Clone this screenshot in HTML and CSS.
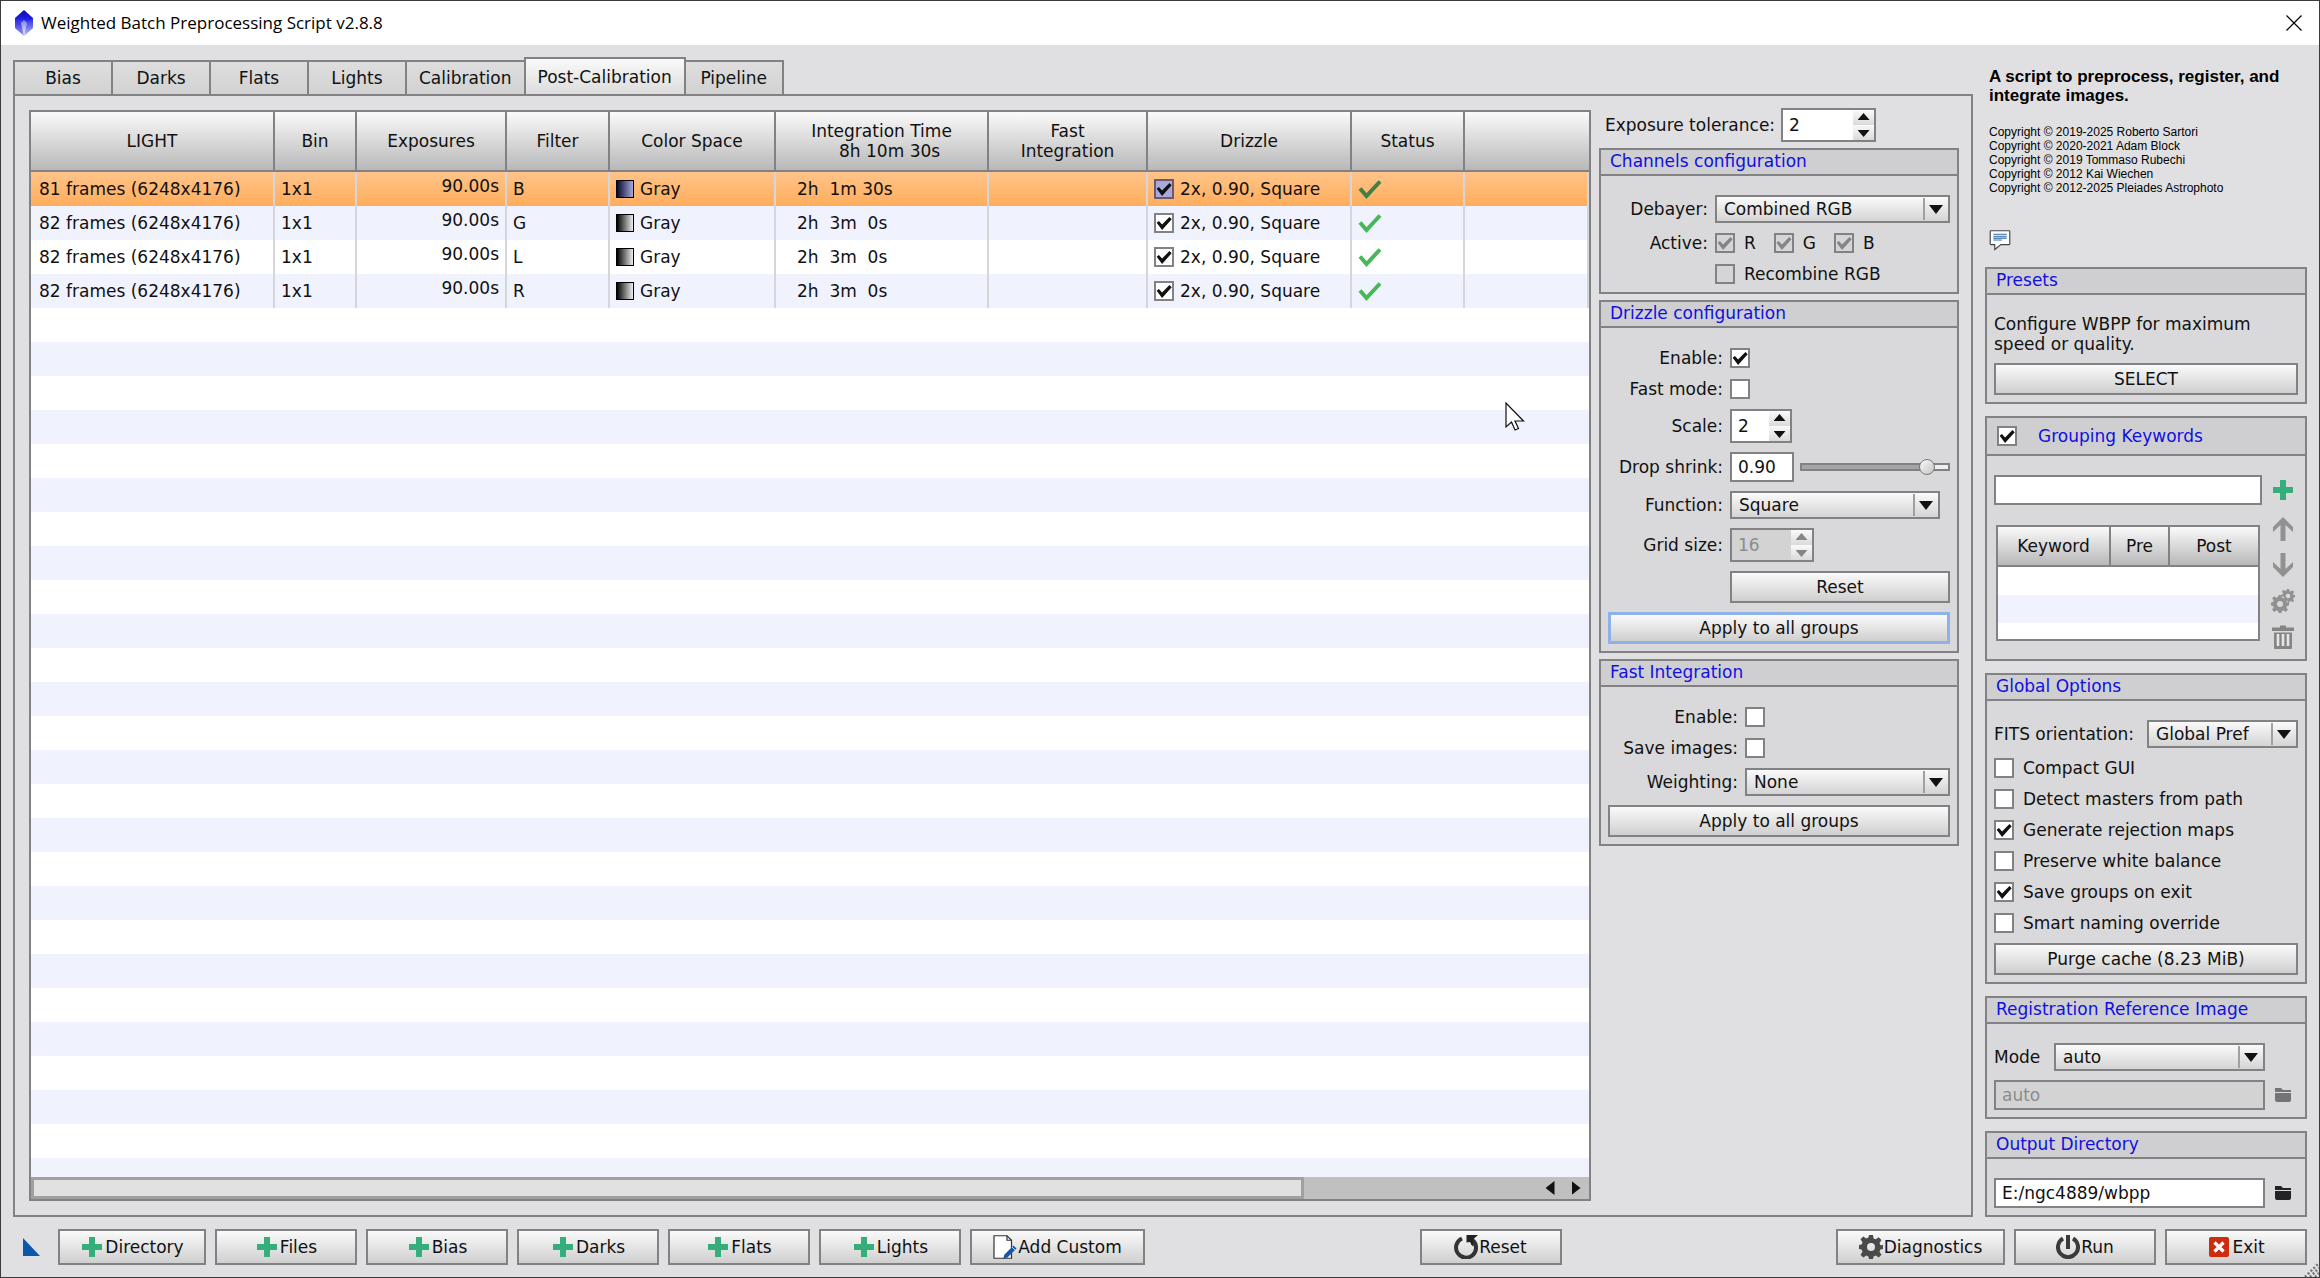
FILE: index.html
```html
<!DOCTYPE html>
<html lang="en">
<head>
<meta charset="utf-8">
<title>Weighted Batch Preprocessing Script v2.8.8</title>
<link rel="stylesheet" href="styles.css">
</head>
<body>
<svg class="defs" aria-hidden="true">
  <symbol id="i-plus" viewBox="0 0 24 24"><path d="M9 2h6v7h7v6h-7v7H9v-7H2V9h7z" fill="#36ae7c"/></symbol>
  <symbol id="i-up" viewBox="0 0 24 24"><path d="M12 0 22 10v5l-7.500-7V24h-5V8L2 15v-5z" fill="#919191"/></symbol>
  <symbol id="i-down" viewBox="0 0 24 24"><path d="M12 24 22 14V9l-7.500 7V0h-5v16L2 9v5z" fill="#919191"/></symbol>
  <symbol id="i-gear" viewBox="0 0 24 24"><path fill-rule="evenodd" d="M10 0h4l.6 3.400 2.200.9 2.900-2 2.800 2.800-2 2.900.9 2.200L24 10v4l-2.600.6-.9 2.200 2 2.900-2.800 2.800-2.900-2-2.200.9L14 24h-4l-.6-2.600-2.200-.9-2.900 2-2.800-2.800 2-2.900-.9-2.200L0 14v-4l2.600-.6.9-2.200-2-2.900 2.800-2.800 2.900 2 2.200-.9zM12 8a4 4 0 1 0 0 8 4 4 0 0 0 0-8z"/></symbol>
  <symbol id="i-folder" viewBox="0 0 18 16"><path d="M1 1h6l2 2h8v2H1z M1 6h16v7q0 2-2 2H3q-2 0-2-2z"/></symbol>
  <symbol id="i-ok" viewBox="0 0 24 20"><path d="M2 9.500 8.500 17 22 2.500" fill="none" stroke="currentColor" stroke-width="4"/></symbol>
</svg>

<div class="window">
  <header class="titlebar">
    <svg class="logo" viewBox="0 0 20 26"><defs><linearGradient id="gem" x1="0" y1="0" x2="0" y2="1"><stop offset="0" stop-color="#0808b4"/><stop offset=".35" stop-color="#2020e0"/><stop offset=".65" stop-color="#8080f4"/><stop offset="1" stop-color="#fafaff"/></linearGradient></defs><path d="M10 0 19 8v10l-9 8-9-8V8z" fill="url(#gem)"/><path d="m1 9 6 4 3 13-9-8z" fill="#2a2ae0" opacity=".45"/><path d="m19 9-6 4-3 13 9-8z" fill="#5050e8" opacity=".35"/><path d="m7 13 3-3 3 3-3 13z" fill="#fff" opacity=".4"/></svg>
    <h1>Weighted Batch Preprocessing Script v2.8.8</h1>
    <button class="close" type="button" aria-label="Close"><svg viewBox="0 0 16 16"><path d="m.5.5 15 15M15.500.5l-15 15" stroke="#000" stroke-width="1.200"/></svg></button>
  </header>

  <main class="content">
    <section class="work">
      <nav class="tabs" role="tablist">
        <button type="button" role="tab">Bias</button>
        <button type="button" role="tab">Darks</button>
        <button type="button" role="tab">Flats</button>
        <button type="button" role="tab">Lights</button>
        <button type="button" role="tab">Calibration</button>
        <button type="button" role="tab" class="active" aria-selected="true">Post-Calibration</button>
        <button type="button" role="tab">Pipeline</button>
      </nav>
      <div class="pane">
        <div class="tree">
          <div class="tree-view">
            <table class="groups">
              <colgroup><col class="c-light"><col class="c-bin"><col class="c-exp"><col class="c-filter"><col class="c-space"><col class="c-time"><col class="c-fast"><col class="c-drizzle"><col class="c-status"><col></colgroup>
              <thead><tr><th>LIGHT</th><th>Bin</th><th>Exposures</th><th>Filter</th><th>Color Space</th><th>Integration Time<br>&nbsp;&nbsp;&nbsp;8h 10m 30s</th><th>Fast<br>Integration</th><th>Drizzle</th><th>Status</th><th></th></tr></thead>
              <tbody>
                <tr class="selected"><td>81 frames (6248x4176)</td><td>1x1</td><td class="exp">90.00s</td><td>B</td><td><span class="cell"><i class="swatch"></i>Gray</span></td><td class="time">2h  1m 30s</td><td></td><td><label class="cell"><input type="checkbox" checked>2x, 0.90, Square</label></td><td><svg class="ok"><use href="#i-ok"/></svg></td><td></td></tr>
                <tr><td>82 frames (6248x4176)</td><td>1x1</td><td class="exp">90.00s</td><td>G</td><td><span class="cell"><i class="swatch"></i>Gray</span></td><td class="time">2h  3m  0s</td><td></td><td><label class="cell"><input type="checkbox" checked>2x, 0.90, Square</label></td><td><svg class="ok"><use href="#i-ok"/></svg></td><td></td></tr>
                <tr><td>82 frames (6248x4176)</td><td>1x1</td><td class="exp">90.00s</td><td>L</td><td><span class="cell"><i class="swatch"></i>Gray</span></td><td class="time">2h  3m  0s</td><td></td><td><label class="cell"><input type="checkbox" checked>2x, 0.90, Square</label></td><td><svg class="ok"><use href="#i-ok"/></svg></td><td></td></tr>
                <tr><td>82 frames (6248x4176)</td><td>1x1</td><td class="exp">90.00s</td><td>R</td><td><span class="cell"><i class="swatch"></i>Gray</span></td><td class="time">2h  3m  0s</td><td></td><td><label class="cell"><input type="checkbox" checked>2x, 0.90, Square</label></td><td><svg class="ok"><use href="#i-ok"/></svg></td><td></td></tr>
              </tbody>
            </table>
          </div>
          <div class="scrollbar">
            <div class="track"><div class="thumb"></div></div>
            <button type="button" class="left" aria-label="Scroll left"></button>
            <button type="button" class="right" aria-label="Scroll right"></button>
          </div>
          <svg class="cursor" viewBox="0 0 20 30"><path d="M1 1v24l5.500-5L10 28l3.500-1.500L10 19h8.500z" fill="#fff" stroke="#111" stroke-width="1.200"/></svg>
        </div>

        <div class="side">
          <div class="tolerance">
            <label for="tol">Exposure tolerance:</label>
            <span class="spin w-tol"><input id="tol" type="number" value="2"><span class="arrows"><button type="button" class="up" aria-label="Increase"></button><button type="button" class="down" aria-label="Decrease"></button></span></span>
          </div>
          <section class="group">
            <h2>Channels configuration</h2>
            <div class="form channels">
              <label for="debayer">Debayer:</label>
              <span class="select"><select id="debayer"><option>Combined RGB</option></select></span>
              <span class="lbl">Active:</span>
              <span class="rgb">
                <label class="check"><input type="checkbox" checked disabled>R</label>
                <label class="check"><input type="checkbox" checked disabled>G</label>
                <label class="check"><input type="checkbox" checked disabled>B</label>
              </span>
              <label class="check field"><input type="checkbox" disabled>Recombine RGB</label>
            </div>
          </section>
          <section class="group">
            <h2>Drizzle configuration</h2>
            <div class="form drizzle">
              <label for="dz-on">Enable:</label><span class="box"><input id="dz-on" type="checkbox" checked></span>
              <label for="dz-fast">Fast mode:</label><span class="box"><input id="dz-fast" type="checkbox"></span>
              <label for="scale">Scale:</label>
              <span class="spin w-scale"><input id="scale" type="number" value="2"><span class="arrows"><button type="button" class="up" aria-label="Increase"></button><button type="button" class="down" aria-label="Decrease"></button></span></span>
              <label for="shrink">Drop shrink:</label>
              <span class="shrink"><input id="shrink" type="text" value="0.90"><input type="range" min="0" max="100" value="90" aria-label="Drop shrink"></span>
              <label for="func">Function:</label>
              <span class="select w-func"><select id="func"><option>Square</option></select></span>
              <label for="grid">Grid size:</label>
              <span class="spin w-grid off"><input id="grid" type="number" value="16" disabled><span class="arrows"><button type="button" class="up" disabled aria-label="Increase"></button><button type="button" class="down" disabled aria-label="Decrease"></button></span></span>
              <button type="button" class="btn field">Reset</button>
              <button type="button" class="btn wide focus">Apply to all groups</button>
            </div>
          </section>
          <section class="group">
            <h2>Fast Integration</h2>
            <div class="form fast">
              <label for="fi-on">Enable:</label><span class="box"><input id="fi-on" type="checkbox"></span>
              <label for="fi-save">Save images:</label><span class="box"><input id="fi-save" type="checkbox"></span>
              <label for="weight">Weighting:</label>
              <span class="select"><select id="weight"><option>None</option></select></span>
              <button type="button" class="btn wide">Apply to all groups</button>
            </div>
          </section>
        </div>
      </div>
    </section>

    <aside class="options">
      <div class="about">
        <p class="lead">A script to preprocess, register, and<br>integrate images.</p>
        <p class="copy">Copyright © 2019-2025 Roberto Sartori<br>Copyright © 2020-2021 Adam Block<br>Copyright © 2019 Tommaso Rubechi<br>Copyright © 2012 Kai Wiechen<br>Copyright © 2012-2025 Pleiades Astrophoto</p>
        <svg class="comment" viewBox="0 0 22 22"><path d="M1.500.75h19q.75 0 .75.75v13q0 .75-.75.75H12L5.500 20.500v-5.250h-4q-.75 0-.75-.75v-13q0-.75.75-.75z" fill="#fff" stroke="#444" stroke-width="1.200"/><path d="M4 4.500h14M4 6.500h14M4 8.500h14M4 10.500h9" stroke="#2d6db0" stroke-width="1.200"/></svg>
      </div>
      <section class="group">
        <h2>Presets</h2>
        <div class="stack">
          <p>Configure WBPP for maximum<br>speed or quality.</p>
          <button type="button" class="btn">SELECT</button>
        </div>
      </section>
      <section class="group">
        <h2 class="tall"><label class="check"><input type="checkbox" checked>Grouping Keywords</label></h2>
        <div class="keywords">
          <input type="text" aria-label="Keyword">
          <button type="button" class="tool" aria-label="Add"><svg><use href="#i-plus"/></svg></button>
          <div class="kw-view">
            <table>
              <colgroup><col class="c-kw"><col class="c-pre"><col></colgroup>
              <thead><tr><th>Keyword</th><th>Pre</th><th>Post</th></tr></thead>
            </table>
          </div>
          <div class="tools">
            <button type="button" class="tool" aria-label="Move up"><svg><use href="#i-up"/></svg></button>
            <button type="button" class="tool" aria-label="Move down"><svg><use href="#i-down"/></svg></button>
            <button type="button" class="tool" aria-label="Settings"><svg viewBox="0 0 24 24" fill="#919191"><use href="#i-gear" x="10" y="0" width="14" height="14"/><circle cx="9" cy="15" r="8" fill="#d9d9db"/><use href="#i-gear" x="0" y="6" width="18" height="18"/></svg></button>
            <button type="button" class="tool" aria-label="Delete"><svg viewBox="0 0 24 24"><path d="M1 2.500h8V.5h6v2h8V6H1z" fill="#858585"/><path d="M3 7.500h18v15.500q0 1-1 1H4q-1 0-1-1z" fill="#858585"/><path d="M7 9v12M12 9v12M17 9v12" stroke="#e6e6e6" stroke-width="2.600"/></svg></button>
          </div>
        </div>
      </section>
      <section class="group">
        <h2>Global Options</h2>
        <div class="stack">
          <div class="row"><label for="fits">FITS orientation:</label><span class="select w-fits"><select id="fits"><option>Global Pref</option></select></span></div>
          <label class="check"><input type="checkbox">Compact GUI</label>
          <label class="check"><input type="checkbox">Detect masters from path</label>
          <label class="check"><input type="checkbox" checked>Generate rejection maps</label>
          <label class="check"><input type="checkbox">Preserve white balance</label>
          <label class="check"><input type="checkbox" checked>Save groups on exit</label>
          <label class="check"><input type="checkbox">Smart naming override</label>
          <button type="button" class="btn">Purge cache (8.23 MiB)</button>
        </div>
      </section>
      <section class="group">
        <h2>Registration Reference Image</h2>
        <div class="files">
          <div class="row"><label for="mode">Mode</label><span class="select w-mode"><select id="mode"><option>auto</option></select></span></div>
          <input class="line2" type="text" value="auto" disabled aria-label="Reference image">
          <button type="button" class="tool muted" aria-label="Browse"><svg class="folder"><use href="#i-folder"/></svg></button>
        </div>
      </section>
      <section class="group">
        <h2>Output Directory</h2>
        <div class="files">
          <input type="text" value="E:/ngc4889/wbpp" aria-label="Output directory">
          <button type="button" class="tool" aria-label="Browse"><svg class="folder"><use href="#i-folder"/></svg></button>
        </div>
      </section>
    </aside>
  </main>

  <footer class="actions">
    <svg class="new" viewBox="0 0 17 18"><path d="M0 0 17 18H0z" fill="#0b57ae"/></svg>
    <div class="set">
      <button type="button" class="btn w-dir"><svg><use href="#i-plus"/></svg>Directory</button>
      <button type="button" class="btn"><svg><use href="#i-plus"/></svg>Files</button>
      <button type="button" class="btn"><svg><use href="#i-plus"/></svg>Bias</button>
      <button type="button" class="btn"><svg><use href="#i-plus"/></svg>Darks</button>
      <button type="button" class="btn"><svg><use href="#i-plus"/></svg>Flats</button>
      <button type="button" class="btn"><svg><use href="#i-plus"/></svg>Lights</button>
      <button type="button" class="btn w-custom"><svg viewBox="0 0 24 24"><path d="M1 .75h13l4.500 4.500v18H1z" fill="#fff" stroke="#333" stroke-width="1.200"/><path d="M14 .75v4.500h4.500" fill="none" stroke="#333" stroke-width="1.200"/><path d="m20.500 10.500 3 3-9 9-4.500 1.500 1.500-4.500z" fill="#1b55a8"/><path d="m19 12 3 3" stroke="#fff" stroke-width=".8"/></svg>Add Custom</button>
    </div>
    <button type="button" class="btn"><svg viewBox="0 0 24 24"><path d="M8 3.500A10 10 0 1 0 18.500 5" fill="none" stroke="#333" stroke-width="4"/><path d="M12.500 0H24l-4.500 4v7.500l-2-1.500-1.500-3-3.500.5z" fill="#222"/></svg>Reset</button>
    <div class="set">
      <button type="button" class="btn w-diag"><svg fill="#4a4a4a"><use href="#i-gear"/></svg>Diagnostics</button>
      <button type="button" class="btn"><svg viewBox="0 0 24 24"><path d="M7 3.500a10 10 0 1 0 10 0" fill="none" stroke="#3a3a3a" stroke-width="4"/><path d="M12 0v14" stroke="#3a3a3a" stroke-width="4"/></svg>Run</button>
      <button type="button" class="btn"><svg viewBox="0 0 24 24"><rect x="2" y="2" width="20" height="20" rx="2" fill="#ce2c0e"/><path d="m7.500 7.500 9 9m0-9-9 9" stroke="#fff" stroke-width="3.200"/></svg>Exit</button>
    </div>
    <svg class="grip" viewBox="0 0 16 16"><path d="M2 16 16 2M7 16l9-9M12 16l4-4" stroke="#777" stroke-width="2.500" stroke-dasharray="2 2"/></svg>
  </footer>
</div>
</body>
</html>
```
FILE: styles.css
```css
* { box-sizing: border-box; }

body {
  margin: 0;
  font: 17px/20px "DejaVu Sans", sans-serif;
  color: #111;
  background: #e0e0e2;
}

h1, h2, p { margin: 0; font-weight: normal; }
button, input, select { font: inherit; color: inherit; margin: 0; }
button { cursor: default; }
svg { display: block; flex: none; }
.defs { position: absolute; width: 0; height: 0; }

.window {
  display: flex;
  flex-direction: column;
  min-height: 100vh;
  border: 1px solid #3c3a3e;
}

/* Title bar */
.titlebar {
  display: flex;
  align-items: center;
  height: 44px;
  padding: 0 17px 0 13px;
  background: #fff;
}
.logo { width: 20px; height: 26px; }
.titlebar h1 {
  flex: 1;
  padding-left: 7px;
  font: 17px/24px "Open Sans", sans-serif;
  color: #000;
}
.close { padding: 0; border: 0; background: none; }
.close svg { width: 16px; height: 16px; }

.content {
  flex: 1;
  display: grid;
  grid-template-columns: minmax(0, 1fr) 322px;
  gap: 12px;
  padding: 0 12px;
}

/* Tabs */
.work { display: flex; flex-direction: column; }
.tabs { display: flex; align-items: flex-end; padding-top: 12px; height: 49px; }
.tabs button {
  height: 34px;
  min-width: 100px;
  padding: 0 12px;
  border: 2px solid #828284;
  border-bottom: 0;
  background: linear-gradient(#dededf, #d2d2d3);
}
.tabs button + button { margin-left: -2px; }
.tabs .active {
  height: 37px;
  background: linear-gradient(#fafafa, #dcdcdc);
}

.pane {
  flex: 1;
  display: grid;
  grid-template-columns: minmax(0, 1fr) 360px;
  gap: 8px;
  padding: 12px 12px 14px 14px;
  border: 2px solid #828284;
}

/* Group list */
.tree {
  position: relative;
  display: flex;
  flex-direction: column;
  margin-top: 2px;
  border: 2px solid #828284;
}
.tree-view {
  flex: 1;
  overflow: hidden;
  background: repeating-linear-gradient(#fff 0 34px, #f0f3fe 34px 68px) 0 60px;
}
table { width: 100%; border-collapse: separate; border-spacing: 0; table-layout: fixed; }
th {
  padding: 0;
  font-weight: normal;
  border-right: 2px solid #828284;
  border-bottom: 2px solid #828284;
  background: linear-gradient(#fafafa, #b8b8b8);
}
th:last-child, td:last-child { border-right: 0; }
.groups th { height: 60px; }
.groups td {
  height: 34px;
  padding: 0 6px;
  white-space: pre;
  border-right: 2px solid #d4d6da;
}
.groups .selected td { background: linear-gradient(#ffc48a, #ffad5b); }
.groups td:first-child { padding-left: 8px; }
.groups .exp { text-align: right; padding-bottom: 6px; }
.groups .time { padding-left: 21px; }
.cell { display: flex; align-items: center; gap: 6px; }
.c-light { width: 244px; }
.c-bin { width: 82px; }
.c-exp { width: 150px; }
.c-filter { width: 103px; }
.c-space { width: 166px; }
.c-time { width: 213px; }
.c-fast { width: 159px; }
.c-drizzle { width: 204px; }
.c-status { width: 113px; }
.swatch { width: 18px; height: 18px; border: 1px solid #000; background: linear-gradient(90deg, #000, #eee); }
.selected .swatch { background: linear-gradient(90deg, #06062c, #a8a8dc); }
.ok { width: 24px; height: 20px; color: #45b957; }
.selected .ok { color: #3f8048; }
.selected input[type="checkbox"] { background: #a9a9de; border-color: #6b5a6c; }

.scrollbar { display: flex; height: 22px; background: #c0c0c0; }
.track { flex: 1; }
.thumb { width: 84.5%; height: 22px; border: 3px solid #a0a0a3; background: #e1e1e1; }
.scrollbar button { width: 26px; padding: 0; border: 0; background: none; }
.scrollbar button::before {
  content: "";
  display: block;
  width: 9px;
  height: 14px;
  margin: 0 auto;
  background: #111;
}
.scrollbar .left::before { clip-path: polygon(100% 0, 100% 100%, 0 50%); }
.scrollbar .right::before { clip-path: polygon(0 0, 100% 50%, 0 100%); }
.cursor { position: absolute; left: 1474px; top: 290px; width: 20px; height: 30px; }

/* Titled boxes */
.side { display: flex; flex-direction: column; gap: 6px; }
.group { border: 2px solid #828284; background: #d9d9db; }
.group h2 {
  height: 26px;
  padding-left: 9px;
  font-size: 17px;
  line-height: 22px;
  color: #1010e0;
  background: #cfcfd1;
  border-bottom: 2px solid #828284;
}
.group h2.tall { display: flex; align-items: center; height: 38px; padding-left: 10px; }
.tall .check { gap: 21px; }

.form { display: grid; gap: 9px 7px; align-items: center; padding: 19px 7px 7px; }
.form > label:not(.check), .lbl { text-align: right; }
.channels { grid-template-columns: 100px minmax(0, 1fr); }
.drizzle { grid-template-columns: 115px minmax(0, 1fr); }
.fast { grid-template-columns: 130px minmax(0, 1fr); }
.field { grid-column: 2; }
.wide { grid-column: 1 / -1; }
.tolerance { display: flex; align-items: center; gap: 6px; padding-left: 6px; }
.box { display: flex; align-items: center; height: 22px; }
.rgb { display: flex; gap: 18px; }
.check { display: flex; align-items: center; gap: 9px; min-height: 22px; }
.stack { display: flex; flex-direction: column; gap: 9px; padding: 19px 7px 7px; }
.row { display: flex; align-items: center; justify-content: space-between; }

/* Controls */
input[type="checkbox"] {
  appearance: none;
  flex: none;
  width: 20px;
  height: 20px;
  border: 2px solid #828284;
  background: #fff;
}
input[type="checkbox"]:checked::before {
  content: "";
  display: block;
  width: 16px;
  height: 16px;
  background: #111;
  clip-path: polygon(4% 48%, 18% 38%, 38% 60%, 84% 12%, 98% 26%, 38% 94%);
}
input[type="checkbox"]:disabled { background: #d5d5d7; }
input[type="checkbox"]:disabled:checked::before { background: #858587; }

input[type="text"], .spin {
  height: 30px;
  min-width: 0;
  padding: 0 6px;
  border: 2px solid #828284;
  background: #fff;
}
input[type="text"]:disabled, .spin.off { color: #8c8c8c; background: #d3d3d4; }

.spin { display: flex; height: 34px; padding: 0; }
.spin input {
  flex: 1;
  min-width: 0;
  padding: 0 6px;
  border: 0;
  background: none;
  appearance: textfield;
}
.spin input::-webkit-inner-spin-button { appearance: none; margin: 0; }
.arrows { display: flex; flex-direction: column; width: 21px; }
.arrows button {
  flex: 1;
  padding: 0;
  border: 0;
  background: linear-gradient(#fafafa, #dadada);
}
.arrows .up { padding-bottom: 2px; }
.arrows .down { padding-top: 2px; }
.arrows button::before {
  content: "";
  display: block;
  width: 12px;
  height: 7px;
  margin: 0 auto;
  background: #111;
}
.arrows .up::before { clip-path: polygon(50% 0, 100% 100%, 0 100%); }
.arrows .down::before { clip-path: polygon(0 0, 100% 0, 50% 100%); }
.arrows button:disabled::before { background: #858587; }
.w-tol { width: 95px; }
.w-scale { width: 62px; }
.w-grid { width: 84px; }

.select { position: relative; display: block; height: 28px; }
.select select {
  appearance: none;
  display: block;
  width: 100%;
  height: 28px;
  padding: 0 28px 0 7px;
  border: 2px solid #828284;
  background: linear-gradient(#a0a0a2, #a0a0a2) right 23px center / 2px 22px no-repeat, linear-gradient(#fafafa, #d4d4d4);
}
.select::after {
  content: "";
  position: absolute;
  right: 7px;
  top: 10px;
  width: 14px;
  height: 9px;
  background: #111;
  clip-path: polygon(0 0, 100% 0, 50% 100%);
  pointer-events: none;
}
.w-func { width: 210px; }
.w-fits { width: 151px; }
.w-mode { width: 211px; }

.shrink { display: flex; align-items: center; gap: 6px; }
.shrink input[type="text"] { width: 64px; }
input[type="range"] { appearance: none; flex: 1; min-width: 0; height: 16px; background: none; }
input[type="range"]::-webkit-slider-runnable-track {
  height: 8px;
  border: 2px solid #828284;
  background: linear-gradient(90deg, #a4a4a6 88%, #eee 88%);
}
input[type="range"]::-webkit-slider-thumb {
  appearance: none;
  width: 16px;
  height: 16px;
  margin-top: -6px;
  border: 1px solid #777;
  border-radius: 50%;
  background: linear-gradient(135deg, #fafafa, #c4c4c4);
}

.btn {
  display: flex;
  align-items: center;
  justify-content: center;
  height: 32px;
  padding: 0 8px;
  border: 2px solid #828284;
  background: linear-gradient(#fafafa, #cfcfcf);
}
.btn.focus { border: 3px solid #8eb1ea; }
.tool {
  display: flex;
  align-items: center;
  justify-content: center;
  width: 30px;
  height: 30px;
  padding: 0;
  border: 0;
  background: none;
}
.tool svg { width: 24px; height: 24px; }
.tool .folder { width: 18px; height: 16px; fill: #232326; }
.muted .folder { fill: #747476; }

/* Right column */
.options { display: flex; flex-direction: column; gap: 12px; }
.about { padding: 22px 0 4px 4px; font-family: "Liberation Sans", sans-serif; color: #000; }
.lead { font-size: 17px; line-height: 19px; font-weight: bold; }
.copy { padding: 20px 0 35px; font-size: 12px; line-height: 14px; }
.comment { width: 22px; height: 21px; }

.keywords { display: grid; grid-template-columns: minmax(0, 1fr) 30px; gap: 9px 6px; padding: 19px 7px 7px; }
.kw-view {
  height: 116px;
  margin: 11px 2px 0;
  border: 2px solid #828284;
  background: repeating-linear-gradient(#fff 0 28px, #f0f3fe 28px 56px) 0 40px;
}
.kw-view th { height: 40px; }
.c-kw { width: 113px; }
.c-pre { width: 59px; }
.tools { display: flex; flex-direction: column; gap: 6px; }

.files { display: grid; grid-template-columns: minmax(0, 1fr) 30px; gap: 9px 3px; padding: 19px 7px 7px; }
.files .row { grid-column: 1; }
.files .line2 { grid-column: 1; }

/* Bottom bar */
.actions { position: relative; display: flex; justify-content: space-between; padding: 12px 12px 12px 22px; }
.new { align-self: center; width: 17px; height: 18px; margin-right: 18px; }
.set { display: flex; gap: 9px; }
.set:last-of-type { margin-left: auto; }
.actions .btn { width: 142px; height: 36px; gap: 1px; }
.actions > .btn { margin-left: auto; }
.actions .btn svg { width: 24px; height: 24px; }
.actions .w-dir { width: 148px; }
.actions .w-custom { width: 175px; }
.actions .w-diag { width: 169px; }
.grip { position: absolute; right: 0; bottom: 0; width: 16px; height: 16px; }
```
